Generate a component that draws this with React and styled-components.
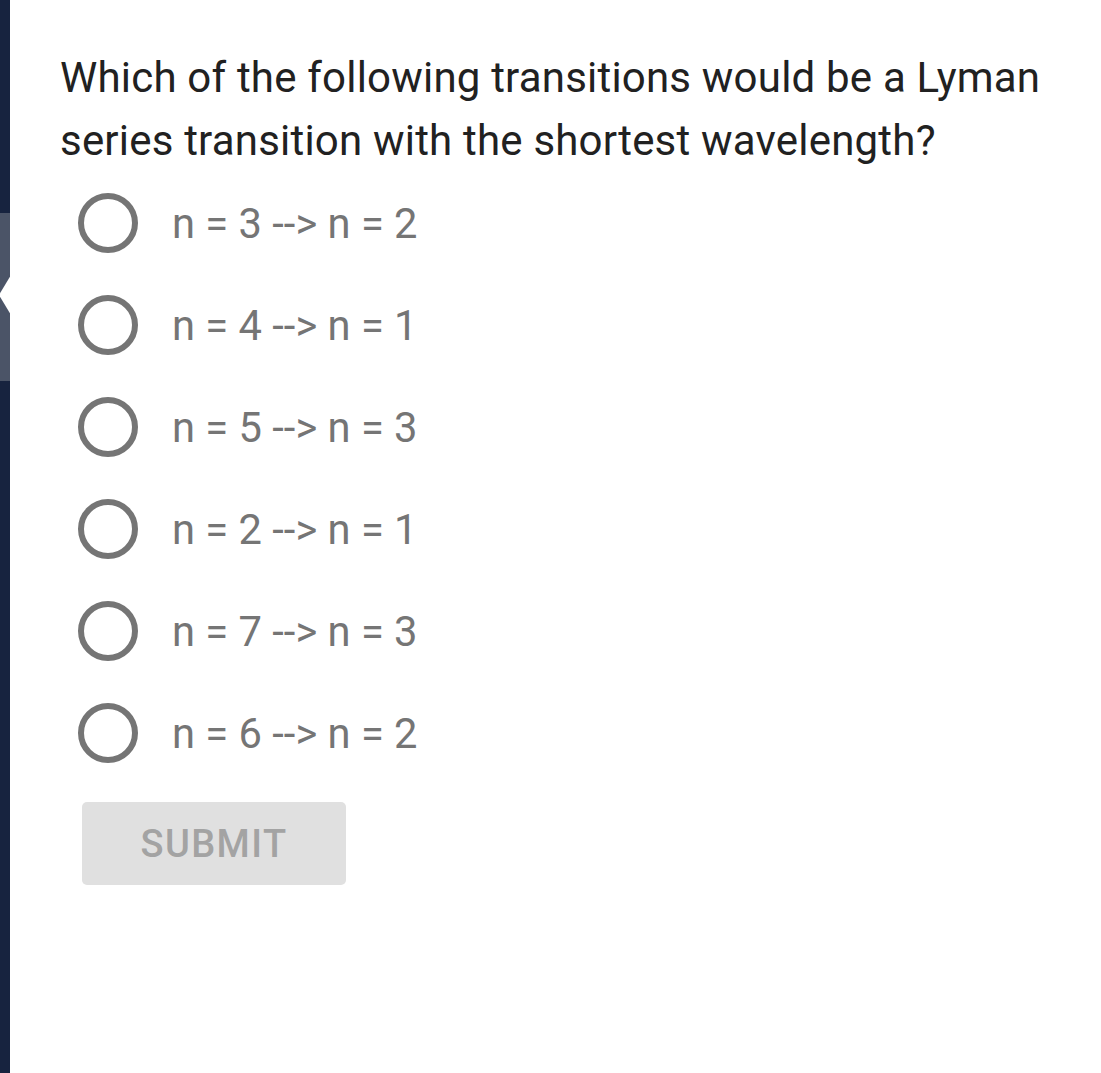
import React from "react";
import styled, { createGlobalStyle } from "styled-components";

const GlobalStyle = createGlobalStyle`
  html, body {
    margin: 0;
    padding: 0;
    background: #ffffff;
  }
  body {
    font-family: Roboto, "Noto Sans", Arial, sans-serif;
  }
`;

export const Page = styled.div`
  display: flex;
  min-height: 1073px;
  width: 1101px;
  background: #ffffff;
`;

export const Rail = styled.div`
  position: relative;
  width: 10px;
  flex-shrink: 0;
  background: #17233f;
  display: flex;
  flex-flow: column;
`;

export const RailSpacer = styled.div`
  height: ${(p) => p.h}px;
`;

export const RailActive = styled.div`
  position: relative;
  height: 168px;
  background: #4b5467;
`;

export const Notch = styled.div`
  position: absolute;
  left: -1px;
  top: 62px;
  width: 0;
  height: 0;
  border-top: 20px solid transparent;
  border-bottom: 20px solid transparent;
  border-right: 12px solid #ffffff;
`;

export const Content = styled.div`
  flex: 1;
  padding: 46px 30px 0 50px;
`;

export const Question = styled.p`
  margin: 0;
  font-size: 42px;
  letter-spacing: 0.2px;
  line-height: 63px;
  font-weight: 400;
  color: #212121;
`;

export const Options = styled.div`
  display: flex;
  flex-flow: column;
`;

export const Option = styled.label`
  display: flex;
  align-items: center;
  height: 102px;
  padding-left: 18px;
`;

export const Radio = styled.span`
  width: 60px;
  height: 60px;
  box-sizing: border-box;
  border: 6px solid #757575;
  border-radius: 50%;
  flex-shrink: 0;
`;

export const OptionText = styled.span`
  margin-left: 34px;
  font-size: 41.7px;
  color: #757575;
`;

export const Submit = styled.button`
  margin: 18px 0 0 22px;
  width: 264px;
  height: 83px;
  border: none;
  border-radius: 5px;
  background: #e0e0e0;
  color: #a3a3a3;
  font-family: Roboto, Arial, sans-serif;
  font-weight: 500;
  font-size: 38px;
  letter-spacing: 1.4px;
  padding: 0;
  cursor: default;
`;

const options = [
  "n = 3 --> n = 2",
  "n = 4 --> n = 1",
  "n = 5 --> n = 3",
  "n = 2 --> n = 1",
  "n = 7 --> n = 3",
  "n = 6 --> n = 2",
];

const App = () => {
  return (
    <Page>
      <GlobalStyle />
      <Rail>
        <RailSpacer h={213} />
        <RailActive>
          <Notch />
        </RailActive>
      </Rail>
      <Content>
        <Question>
          Which of the following transitions would be a Lyman series
          transition with the shortest wavelength?
        </Question>
        <Options>
          {options.map((o) => (
            <Option key={o}>
              <Radio />
              <OptionText>{o}</OptionText>
            </Option>
          ))}
        </Options>
        <Submit>SUBMIT</Submit>
      </Content>
    </Page>
  );
};

export default App;
